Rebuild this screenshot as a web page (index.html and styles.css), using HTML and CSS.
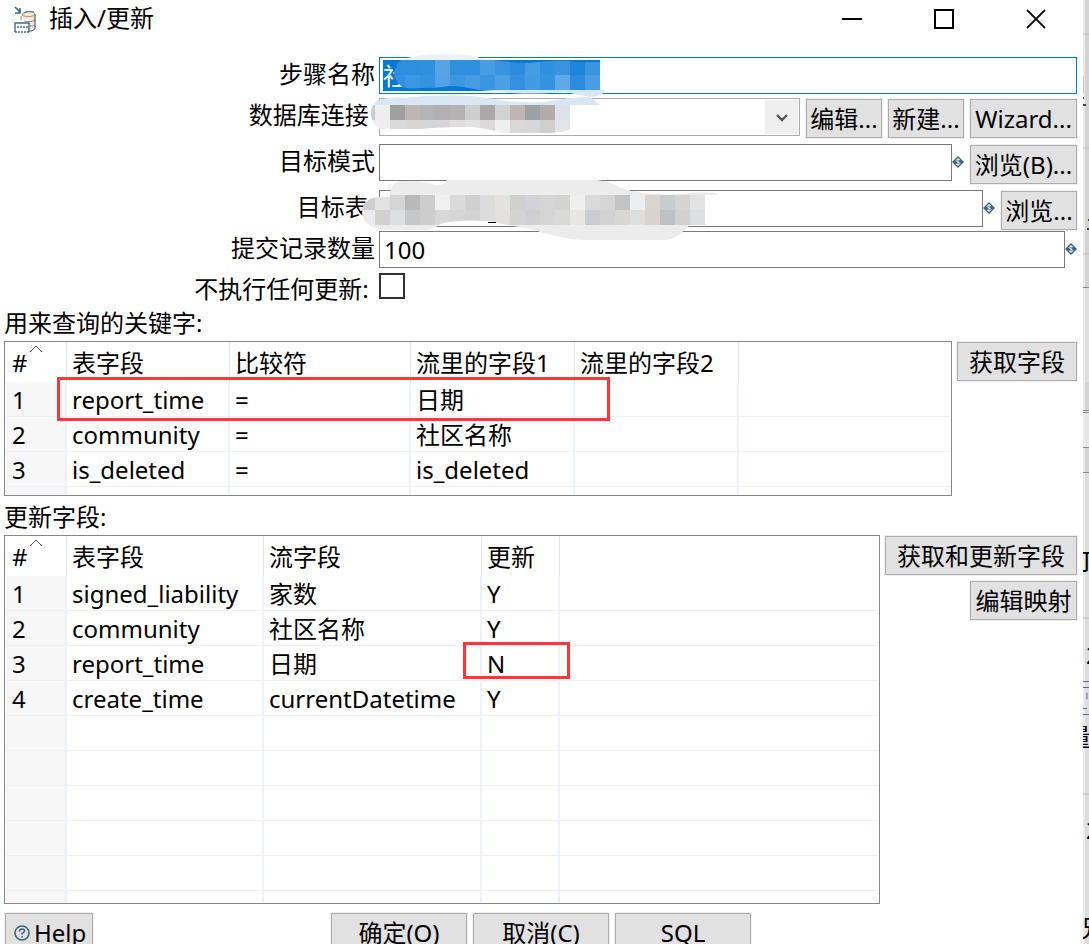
FILE: index.html
```html
<!DOCTYPE html>
<html lang="zh-CN">
<head>
    <meta charset="UTF-8">
    <meta name="viewport" content="width=device-width, initial-scale=1.0">
    <title>插入/更新</title>
    <link rel="stylesheet" href="styles.css">
</head>
<body>
    <div class="dialog">
        <!-- title bar -->
        <div class="title-bar">
            <svg class="title-icon" viewBox="0 0 24 28" fill="none">
                <path d="M8 8c3-3 11-3 13 0v14c-1 3-3 3-6 3V14H7z" fill="#fce8cc"/>
                <path d="M8 10c1-4 12-4 13-1v14c0 2-4 3-7 3M8 10c3 2 10 2 13 0M10 16c4 1 8 1 11-1M15 21c3 0 5 0 6-1M7 11v4" stroke="#8b8f91"/>
                <path d="M21 9v14c0 2-3 3-5 3M10 8c2-2 7-2 10-1" stroke="#4c7795"/>
                <path d="M1 2l5 5M6 3v5H1" stroke="#3d6480" stroke-width="1.6"/>
                <rect x="1" y="18" width="14" height="9" fill="#fff"/>
                <path d="M1 27V18h14v9" stroke="#3d6c8e" stroke-width="1.4"/>
                <path d="M3 22h11M1 27h14" stroke="#3d6c8e" stroke-width="1.4" stroke-dasharray="2 1"/>
            </svg>
            <h1>插入/更新</h1>
            <div class="window-buttons">
                <button aria-label="最小化"><svg viewBox="0 0 20 20"><path d="M0 10h20" stroke="#000" stroke-width="2"/></svg></button>
                <button aria-label="最大化"><svg viewBox="0 0 20 20"><rect x="1" y="1" width="18" height="18" fill="none" stroke="#000" stroke-width="2"/></svg></button>
                <button aria-label="关闭"><svg viewBox="0 0 20 20"><path d="M1 1l18 18M19 1L1 19" stroke="#111" stroke-width="1.8"/></svg></button>
            </div>
        </div>

        <!-- step settings -->
        <div class="form">
            <div class="row">
                <label for="step">步骤名称</label>
                <input class="field focused" id="step" type="text" value="社">
            </div>
            <div class="row row-tall">
                <label for="connection">数据库连接&nbsp;</label>
                <div class="combo">
                    <select id="connection"><option></option></select>
                    <svg viewBox="0 0 12 9"><path d="M1 1l5 5 5-5" fill="none" stroke="#555" stroke-width="2.4"/></svg>
                </div>
                <button class="btn btn-small">编辑...</button>
                <button class="btn btn-small">新建...</button>
                <button class="btn btn-wide">Wizard...</button>
            </div>
            <div class="row row-tall">
                <label for="schema">目标模式</label>
                <input class="field" id="schema" type="text">
                <svg class="variable" viewBox="0 0 12 12"><path d="M6 0l6 6-6 6-6-6z" fill="#3d6480"/><path d="M8 4C7 3 4 3 4 4.500S8 6 8 7.500 5 9 4 8M6 2v8" fill="none" stroke="#e6eef3"/></svg>
                <button class="btn btn-wide">浏览(B)...</button>
            </div>
            <div class="row">
                <label for="target">目标表&nbsp;</label>
                <input class="field" id="target" type="text">
                <svg class="variable" viewBox="0 0 12 12"><path d="M6 0l6 6-6 6-6-6z" fill="#3d6480"/><path d="M8 4C7 3 4 3 4 4.500S8 6 8 7.500 5 9 4 8M6 2v8" fill="none" stroke="#e6eef3"/></svg>
                <button class="btn btn-small">浏览...</button>
            </div>
            <div class="row">
                <label for="commit">提交记录数量</label>
                <input class="field" id="commit" type="text" value="100">
                <svg class="variable" viewBox="0 0 12 12"><path d="M6 0l6 6-6 6-6-6z" fill="#3d6480"/><path d="M8 4C7 3 4 3 4 4.500S8 6 8 7.500 5 9 4 8M6 2v8" fill="none" stroke="#e6eef3"/></svg>
            </div>
            <div class="row row-last">
                <label for="noupdate">不执行任何更新:&nbsp;</label>
                <input class="check" id="noupdate" type="checkbox">
            </div>

            <!-- mosaic brushed over the private values -->
            <svg class="mosaic" id="mosaic" viewBox="360 50 360 195" aria-hidden="true">
                <defs>
                    <clipPath id="brush1"><path d="M394 73Q396 60 407 58Q425 54 440 54Q470 54 480 58Q510 63 530 63Q560 59 580 62H600V90H605Q604 96 590 97Q575 94 565 92Q520 95 505 92L480 90Q460 86 450 86Q430 89 405 88Q395 84 394 73Z"/></clipPath>
                    <clipPath id="brush2"><path d="M371 114Q371 105 378 100Q395 96 405 98Q435 94 470 96Q490 98 505 101Q530 103 545 102Q570 97 590 97L600 105H570V130Q560 133 550 133H503Q485 128 470 127Q440 127 420 129Q400 129 380 129Q371 123 371 114Z"/></clipPath>
                    <clipPath id="brush3"><path d="M390 197Q389 182 402 181Q425 181 432 184Q443 188 447 180H597Q612 182 621 188Q645 196 680 194Q700 191 715 193L718 195H705V225H690Q675 240 665 240H580Q550 236 535 230Q500 224 490 221Q455 219 440 224Q432 231 420 230H385Q362 227 362 212Q362 200 377 197Z"/></clipPath>
                </defs>
            </svg>
        </div>

        <!-- lookup keys -->
        <div class="section">
            <h2>用来查询的关键字:</h2>
            <div class="section-body">
                <div class="list list-keys">
                    <table>
                        <colgroup><col class="c-num"><col class="c-163"><col class="c-181"><col class="c-164"><col class="c-164"><col></colgroup>
                        <thead>
                            <tr><th>#<svg class="sort" viewBox="0 0 14 8"><path d="M1 7l6-6 6 6" fill="none" stroke="#555"/></svg></th><th>表字段</th><th>比较符</th><th>流里的字段1</th><th>流里的字段2</th><th></th></tr>
                        </thead>
                        <tbody>
                            <tr><td>1</td><td>report_time</td><td>=</td><td>日期</td><td></td><td></td></tr>
                            <tr><td>2</td><td>community</td><td>=</td><td>社区名称</td><td></td><td></td></tr>
                            <tr><td>3</td><td>is_deleted</td><td>=</td><td>is_deleted</td><td></td><td></td></tr>
                            <tr><td></td><td></td><td></td><td></td><td></td><td></td></tr>
                        </tbody>
                    </table>
                </div>
                <div class="mark mark-key"></div>
                <div class="side-buttons">
                    <button class="btn btn-fields">获取字段</button>
                </div>
            </div>
        </div>

        <!-- update fields -->
        <div class="section">
            <h2>更新字段:</h2>
            <div class="section-body">
                <div class="list list-update">
                    <table>
                        <colgroup><col class="c-num"><col class="c-197"><col class="c-218"><col class="c-78"><col></colgroup>
                        <thead>
                            <tr><th>#<svg class="sort" viewBox="0 0 14 8"><path d="M1 7l6-6 6 6" fill="none" stroke="#555"/></svg></th><th>表字段</th><th>流字段</th><th>更新</th><th></th></tr>
                        </thead>
                        <tbody>
                            <tr><td>1</td><td>signed_liability</td><td>家数</td><td>Y</td><td></td></tr>
                            <tr><td>2</td><td>community</td><td>社区名称</td><td>Y</td><td></td></tr>
                            <tr><td>3</td><td>report_time</td><td>日期</td><td>N</td><td></td></tr>
                            <tr><td>4</td><td>create_time</td><td>currentDatetime</td><td>Y</td><td></td></tr>
                            <tr><td></td><td></td><td></td><td></td><td></td></tr>
                            <tr><td></td><td></td><td></td><td></td><td></td></tr>
                            <tr><td></td><td></td><td></td><td></td><td></td></tr>
                            <tr><td></td><td></td><td></td><td></td><td></td></tr>
                            <tr><td></td><td></td><td></td><td></td><td></td></tr>
                            <tr><td></td><td></td><td></td><td></td><td></td></tr>
                        </tbody>
                    </table>
                </div>
                <div class="mark mark-update"></div>
                <div class="side-buttons">
                    <button class="btn btn-both">获取和更新字段</button>
                    <button class="btn btn-wide">编辑映射</button>
                </div>
            </div>
        </div>

        <!-- footer -->
        <div class="footer">
            <button class="btn btn-help"><svg viewBox="0 0 16 16" fill="none" stroke="#3d6480"><circle cx="8" cy="8" r="7" stroke-width="1.6"/><path d="M5.500 6.500Q5.500 4 8 4t2.500 2Q10.500 7 8 8.500v1M8 11v1.500" stroke-width="1.500"/></svg>Help</button>
            <div class="footer-buttons">
                <button class="btn">确定(O)</button>
                <button class="btn">取消(C)</button>
                <button class="btn">SQL</button>
            </div>
        </div>
    </div>

    <!-- sliver of the window behind -->
    <svg class="behind" width="6" height="944" aria-hidden="true">
        <rect width="6" height="944" fill="#d2d2d2"/>
        <rect y="288" width="6" height="94" fill="#dedede"/>
        <rect y="411" width="6" height="36" fill="#e6e6e6"/>
        <rect y="473" width="6" height="471" fill="#dcdcdc"/>
        <rect width="2" height="944" fill="#ebebeb"/>
        <path d="M0 34h6M0 148h6M0 254h6M0 618h6M0 794h6" stroke="#bdbdbd" stroke-width="1"/>
        <path d="M0 287.500h6M0 410.500h6M0 412.500h6M0 447.500h6M0 472.500h6" stroke="#8a8a8f"/>
        <path d="M0 76v17" stroke="#999"/>
        <path d="M0 98h1M0 105h3M5 220h1M4 229h2" stroke="#444" stroke-width="2"/>
        <path d="M0 681.500h6M0 687.500h6M0 708.500h4M0 714.500h6M4 693v6" stroke="#51738c"/>
        <text x="-9" y="570">丁</text>
        <text x="3" y="664">2</text>
        <text x="-16" y="746">量</text>
        <text x="3" y="839">2</text>
        <text x="-2" y="937">兄</text>
    </svg>
    <script>
    // each run is [x, y, colours], one colour per 15px tile
    const brushes = {
        brush1: [
            [390, 45, Array(15).fill("#eaf2fa")],
            [390, 60, ["#2f8fdf", "#2f8fdf", "#3090de", "#58a3e4", "#3090e0", "#2f8fdf", "#479ce3", "#3a94df", "#2b8bdd", "#459ce3", "#3090e0", "#3a93e0", "#1d86da", "#3a94df"]],
            [390, 75, ["#3391e0", "#3d97e2", "#3592e0", "#55a1e5", "#3d96e0", "#489ce4", "#3a95e2", "#4d9fe4", "#3590df", "#429ae3", "#3691df", "#5ea8e7", "#2b8bdc", "#4a9de3"]],
            [390, 90, Array(15).fill("#d9e7f4")]
        ],
        brush2: [
            [360, 90, Array(16).fill("#d9e7f4")],
            [360, 105, ["#c8cacc", "#eeeeee", "#9f9f9f", "#bdb7b2", "#b0b5b5", "#b3afb2", "#b5b2b5", "#cdcfce", "#aba8aa", "#d1d2d4", "#beb6b4", "#9ba1a6", "#b2aca8", "#dde1ea"]],
            [360, 120, ["#eeeeee", "#eeeeee", "#dadada", "#d7d5d3", "#d3d5d6", "#d9d5d7", "#dfdfdf", "#e2e3e2", "#dbd9da", "#efefef", "#dad8d6", "#d5d8d6", "#d0cfcd", "#e2e4e7"]]
        ],
        brush3: [
            [360, 180, Array(24).fill("#ececec")],
            [360, 195, ["#cfcfd0", "#e3e3e3", "#d6d5d3", "#b9b9b9", "#cccccc", "#f0f0f0", "#dadada", "#d0d0d0", "#dcdcdf", "#e3e2e0", "#cfcfcd", "#d1d2da", "#d5d5d5", "#d3d3d3", "#efefed", "#dadada", "#d5d5d5", "#c4c3c1", "#ebeef1", "#d9d4d0", "#c7cccf", "#d6d4d2", "#e2e4e3"]],
            [360, 210, ["#ebebeb", "#d2d1cf", "#dadfe2", "#c6c6c9", "#cdcdcd", "#d8d8d8", "#d5d5d5", "#d3d3d3", "#dcdcdc", "#e2e1df", "#d3d3d1", "#cfcfd2", "#d5d5d3", "#d9d9d9", "#e7e6e3", "#cbccd1", "#d3d3d4", "#d7d6d3", "#dededf", "#d8d3cf", "#bdc1c5", "#d3d1cf", "#dddfe1"]],
            [360, 225, Array(24).fill("#ececec")]
        ]
    };
    const mosaic = document.getElementById("mosaic");
    let tiles = '<path d="M383 60h217v31H383z" fill="#0078d7"/><text class="selected" x="383" y="85">社</text>';
    for (const name in brushes) {
        tiles += `<g clip-path="url(#${name})" shape-rendering="crispEdges">`;
        brushes[name].forEach(([x, y, colors]) => {
            colors.forEach((color, i) => {
                tiles += `<rect x="${x + i * 15}" y="${y}" width="15" height="15" fill="${color}"/>`;
            });
        });
        tiles += "</g>";
    }
    tiles += '<path d="M488 222.500h8" stroke="#000" stroke-width="1"/>';
    mosaic.innerHTML += tiles;
    </script>
</body>
</html>
```
FILE: styles.css
```css
* {
    box-sizing: border-box;
}
body {
    margin: 0;
    height: 100vh;
    display: flex;
    overflow: hidden;
    background: #fff;
    color: #000;
    font-family: "Noto Sans", "Noto Sans CJK SC", sans-serif;
    font-size: 24px;
}
button, input, select {
    font: inherit;
    color: inherit;
    margin: 0;
    border-radius: 0;
}
h1, h2 {
    margin: 0;
    font-size: 24px;
    font-weight: normal;
}
.dialog {
    flex: 1;
    min-width: 0;
    overflow: hidden;
}
.behind {
    flex: none;
}

/* title bar */
.title-bar {
    display: flex;
    align-items: center;
    height: 38px;
    padding: 0 1px 0 14px;
}
.title-bar h1 {
    line-height: 34px;
    padding-bottom: 2px;
}
.title-icon {
    width: 24px;
    height: 28px;
    margin-right: 11px;
}
.window-buttons {
    display: flex;
    margin-left: auto;
}
.window-buttons button {
    display: flex;
    justify-content: center;
    width: 92px;
    padding: 0;
    border: none;
    background: none;
}
.window-buttons svg {
    width: 20px;
    height: 20px;
}

/* form */
.form {
    position: relative;
    padding: 19px 6px 0 0;
}
.row {
    display: flex;
    align-items: flex-start;
    height: 41px;
}
.row-tall {
    height: 46px;
}
.row-last {
    height: 32px;
}
.row label {
    width: 379px;
    padding-right: 4px;
    line-height: 33px;
    text-align: right;
}
.field {
    flex: 1;
    min-width: 0;
    height: 37px;
    padding: 0 4px;
    border: 1px solid #7a7a7a;
    background: #fff;
}
.focused {
    border-color: #0078d7;
}
.combo {
    position: relative;
    flex: 1;
}
.combo select {
    display: block;
    width: 100%;
    height: 38px;
    border: 1px solid #adadad;
    appearance: none;
    background: linear-gradient(#efefef, #efefef) right 1px center / 33px 34px no-repeat #fff;
}
.combo svg {
    position: absolute;
    right: 12px;
    top: 16px;
    width: 12px;
    height: 9px;
}
.variable {
    width: 12px;
    height: 12px;
    margin-top: 12px;
}
.check {
    width: 26px;
    height: 26px;
    margin-top: 1px;
    border: 2px solid #333;
    appearance: none;
    background: #fff;
}
.mosaic {
    position: absolute;
    left: 360px;
    top: 12px;
    width: 360px;
    height: 195px;
    pointer-events: none;
}
.selected {
    fill: #fff;
}

/* buttons */
.btn {
    height: 39px;
    padding: 0;
    border: 1px solid #adadad;
    background: #e1e1e1;
    box-shadow: 0 0 0 1px #f0f0f0;
    line-height: 36px;
    white-space: nowrap;
}
.row .btn {
    margin: 1px 0 0 6px;
}
.btn-small {
    width: 76px;
}
.btn-wide {
    width: 107px;
}
.btn-fields {
    width: 120px;
}
.btn-both {
    width: 192px;
}

/* lists */
.section + .section {
    margin-top: 2px;
}
.section h2 {
    padding-left: 4px;
    line-height: 37px;
}
.section-body {
    position: relative;
    display: flex;
    gap: 5px;
    padding: 0 6px 0 4px;
}
.list {
    flex: 1;
    min-width: 0;
    padding: 0 1px 1px;
    border: 1px solid #828790;
    overflow: hidden;
}
.list-keys {
    height: 155px;
}
.list-update {
    height: 369px;
}
.list table {
    width: 100%;
    table-layout: fixed;
    border-collapse: separate;
    border-spacing: 0;
}
.list th, .list td {
    padding: 2px 0 0 5px;
    text-align: left;
    font-weight: normal;
    white-space: nowrap;
}
.list th {
    position: relative;
    height: 40px;
    line-height: 38px;
    border-right: 1px solid #e5e5e5;
}
.list td {
    height: 35px;
    line-height: 32px;
    border-right: 2px solid #ecf2fa;
    border-bottom: 1px solid #f0f0f0;
}
.list th:first-child, .list td:first-child {
    padding-left: 6px;
}
.list th:last-child, .list td:last-child {
    border-right: none;
}
.list td:first-child {
    background: #f7f7f7;
}
.sort {
    position: absolute;
    left: 23px;
    top: 3px;
    width: 14px;
    height: 8px;
}
.c-num { width: 61px; }
.c-78 { width: 78px; }
.c-163 { width: 163px; }
.c-164 { width: 164px; }
.c-181 { width: 181px; }
.c-197 { width: 197px; }
.c-218 { width: 218px; }
.side-buttons {
    display: flex;
    flex-direction: column;
    align-items: flex-end;
    gap: 6px;
    padding-top: 1px;
}

/* red marker boxes */
.mark {
    position: absolute;
    border: 3px solid #fd3737;
}
.mark-key {
    left: 57px;
    top: 36px;
    width: 553px;
    height: 44px;
}
.mark-update {
    left: 463px;
    top: 107px;
    width: 107px;
    height: 37px;
}

/* footer */
.footer {
    display: grid;
    grid-template-columns: 1fr auto 1fr;
    padding: 9px 6px 8px 5px;
}
.btn-help {
    display: flex;
    align-items: center;
    gap: 4px;
    justify-self: start;
    padding: 0 6px 0 8px;
}
.btn-help svg {
    width: 16px;
    height: 16px;
}
.footer-buttons {
    display: flex;
    gap: 6px;
}
.footer-buttons .btn {
    width: 136px;
}
```
